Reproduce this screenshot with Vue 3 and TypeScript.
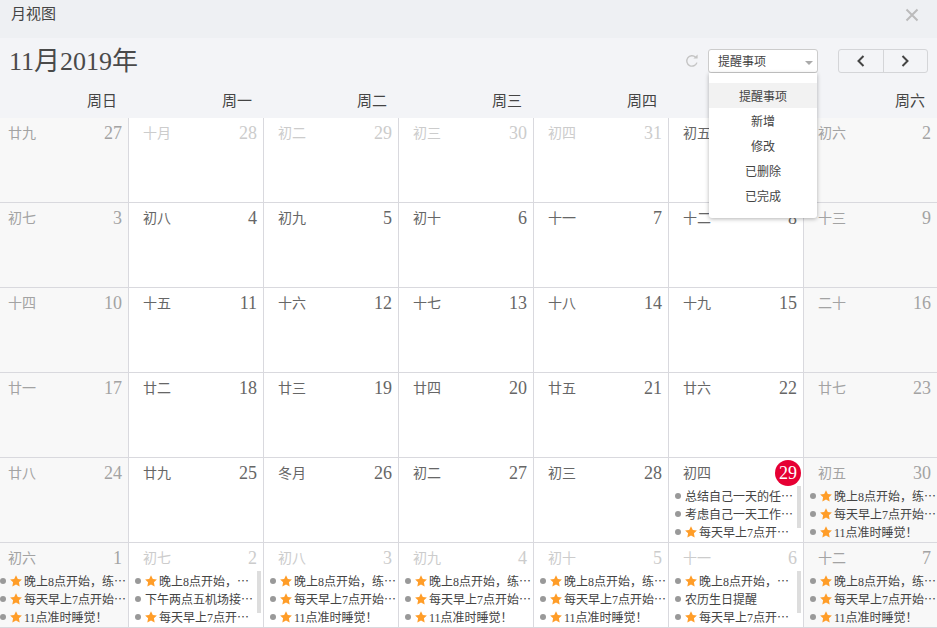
<template>
  <div class="page">
    <div class="title-bar">
      <span class="title">月视图</span>
      <svg class="close" width="14" height="14" viewBox="0 0 14 14">
        <path d="M1.5 1.5 12.5 12.5M12.5 1.5 1.5 12.5" />
      </svg>
    </div>

    <div class="toolbar">
      <h1 class="month">11月2019年</h1>
      <svg class="refresh" width="14" height="14" viewBox="0 0 14 14">
        <path d="M11.9 8.6A5.2 5.2 0 1 1 10.6 3.2" />
        <path class="refresh-tip" d="M8.4 4.6h4.2V.6z" />
      </svg>
      <div class="select">
        <span>提醒事项</span>
        <i class="caret"></i>
        <ul class="menu">
          <li v-for="(item, i) in menuItems" :key="item" :class="{ active: i === 0 }">{{ item }}</li>
        </ul>
      </div>
      <div class="nav">
        <button type="button">
          <svg width="10" height="14" viewBox="0 0 10 14"><path d="M7.5 2 2.5 7l5 5" /></svg>
        </button>
        <button type="button">
          <svg width="10" height="14" viewBox="0 0 10 14"><path d="M2.5 2l5 5-5 5" /></svg>
        </button>
      </div>
    </div>

    <div class="week grid">
      <div v-for="name in weekNames" :key="name" class="week-name">{{ name }}</div>
    </div>

    <div class="days grid">
      <div
        v-for="(day, i) in days"
        :key="i"
        class="day"
        :class="{ weekend: day.weekend, other: day.other, first: i % 7 === 0 }"
      >
        <div class="day-head">
          <span class="lunar">{{ day.lunar }}</span>
          <span class="num" :class="{ today: day.today }">{{ day.num }}</span>
        </div>
        <ul v-if="day.events.length" class="events">
          <li v-for="ev in day.events" :key="ev.text" class="event">
            <i class="dot"></i>
            <svg v-if="ev.star" class="star" width="12" height="12" viewBox="0 0 12 12">
              <path d="M6 .2l1.8 3.75 4.1.55-3 2.83.77 4.07L6 9.42l-3.67 1.98.77-4.07-3-2.83 4.1-.55z" />
            </svg>
            <span class="event-text">{{ ev.text }}</span>
          </li>
          <i v-if="day.scroll" class="scrollbar"></i>
        </ul>
      </div>
    </div>
  </div>
</template>

<script setup lang="ts">
interface CalEvent {
  text: string;
  star: boolean;
}

interface Day {
  lunar: string;
  num: number;
  weekend: boolean;
  other: boolean;
  today: boolean;
  scroll: boolean;
  events: CalEvent[];
}

const weekNames = ['周日', '周一', '周二', '周三', '周四', '周五', '周六'];
const menuItems = ['提醒事项', '新增', '修改', '已删除', '已完成'];

const lunars = [
  '廿九', '十月', '初二', '初三', '初四', '初五', '初六',
  '初七', '初八', '初九', '初十', '十一', '十二', '十三',
  '十四', '十五', '十六', '十七', '十八', '十九', '二十',
  '廿一', '廿二', '廿三', '廿四', '廿五', '廿六', '廿七',
  '廿八', '廿九', '冬月', '初二', '初三', '初四', '初五',
  '初六', '初七', '初八', '初九', '初十', '十一', '十二',
];

const routine: CalEvent[] = [
  { text: '晚上8点开始，练⋯', star: true },
  { text: '每天早上7点开始⋯', star: true },
  { text: '11点准时睡觉！', star: true },
];

const scrolling: Record<number, CalEvent[]> = {
  33: [
    { text: '总结自己一天的任⋯', star: false },
    { text: '考虑自己一天工作⋯', star: false },
    { text: '每天早上7点开⋯', star: true },
  ],
  36: [
    { text: '晚上8点开始，⋯', star: true },
    { text: '下午两点五机场接⋯', star: false },
    { text: '每天早上7点开⋯', star: true },
  ],
  40: [
    { text: '晚上8点开始，⋯', star: true },
    { text: '农历生日提醒', star: false },
    { text: '每天早上7点开⋯', star: true },
  ],
};

const days: Day[] = lunars.map((lunar, i) => {
  const date = new Date(2019, 9, 27 + i);
  return {
    lunar,
    num: date.getDate(),
    weekend: i % 7 === 0 || i % 7 === 6,
    other: date.getMonth() !== 10,
    today: i === 33,
    scroll: i in scrolling,
    events: scrolling[i] ?? (i >= 34 ? routine : []),
  };
});
</script>

<style>
html,
body {
  overflow: hidden;
}
</style>

<style scoped>
ul {
  list-style: none;
  margin: 0;
  padding: 0;
}

.page {
  width: 937px;
  height: 628px;
  overflow: hidden;
  background: #f3f4f7;
  color: #444;
  font-family: "Liberation Serif", "Noto Sans CJK SC", serif;
}

.title-bar {
  height: 38px;
  display: flex;
  align-items: flex-start;
  justify-content: space-between;
  padding: 6px 18px 0 11px;
  box-sizing: border-box;
  background: #eef0f3;
}

.title {
  font-size: 15px;
  line-height: 16px;
  color: #444;
}

.close {
  margin-top: 2px;
}

.close path {
  fill: none;
  stroke: #bbb;
  stroke-width: 2;
}

.toolbar {
  height: 46px;
  display: flex;
  align-items: center;
  padding: 0 9px;
}

.month {
  margin: 0 auto 6px 0;
  font-size: 26px;
  font-weight: normal;
  color: #4a4a4a;
}

.refresh {
  margin-right: 9px;
}

.refresh path {
  fill: none;
  stroke: #c4c4c4;
  stroke-width: 1.4;
}

.refresh .refresh-tip {
  fill: #c4c4c4;
  stroke: none;
}

.select {
  position: relative;
  width: 110px;
  height: 24px;
  box-sizing: border-box;
  display: flex;
  align-items: center;
  padding-left: 9px;
  background: #fff;
  border: 1px solid #ccc;
  border-radius: 3px;
  font-size: 12px;
}

.caret {
  position: absolute;
  right: 4px;
  top: 11px;
  border-style: solid;
  border-width: 4px 4px 0;
  border-color: #aaa transparent transparent;
}

.menu {
  position: absolute;
  top: 23px;
  left: 0;
  z-index: 5;
  width: 108px;
  padding: 10px 0;
  background: #fff;
  border-radius: 0 0 3px 3px;
  box-shadow: 0 1px 4px rgba(0, 0, 0, 0.3);
}

.menu li {
  height: 25px;
  line-height: 28px;
  text-align: center;
}

.menu li.active {
  background: #f2f2f2;
}

.nav {
  display: flex;
  margin-left: 20px;
  width: 90px;
  height: 24px;
  box-sizing: border-box;
  border: 1px solid #d4d5d8;
  border-radius: 3px;
}

.nav button {
  flex: 1;
  display: flex;
  align-items: center;
  justify-content: center;
  padding: 0;
  border: none;
  background: transparent;
}

.nav button + button {
  border-left: 1px solid #d4d5d8;
}

.nav path {
  fill: none;
  stroke: #444;
  stroke-width: 2;
}

.grid {
  display: grid;
  grid-template-columns: 129px repeat(5, 135px) 133px;
}

.week-name {
  height: 34px;
  line-height: 34px;
  padding-right: 12px;
  text-align: right;
  font-size: 15px;
  color: #444;
}

.days {
  grid-auto-rows: 85px;
  background: #fff;
}

.day {
  min-width: 0;
  box-sizing: border-box;
  border-right: 1px solid #d9d9de;
  border-bottom: 1px solid #d9d9de;
  color: #666;
}

.day:nth-child(7n) {
  border-right: none;
}

.day.other {
  color: #ccc;
}

.day.weekend {
  background: #f8f8f8;
  color: #a3a3a3;
}

.day-head {
  height: 30px;
  margin-bottom: -1px;
  display: flex;
  align-items: center;
  justify-content: space-between;
  padding: 0 6px 0 14px;
}

.first .day-head {
  padding-left: 8px;
}

.lunar {
  margin-bottom: 2px;
  font-size: 14px;
}

.num {
  font-size: 18px;
}

.num.today {
  width: 26px;
  height: 26px;
  margin-right: -4px;
  border-radius: 50%;
  background: #e60033;
  color: #fff;
  line-height: 26px;
  text-align: center;
}

.events {
  position: relative;
}

.event {
  height: 18px;
  display: flex;
  align-items: center;
  padding-left: 6px;
  font-size: 12px;
  color: #444;
  white-space: nowrap;
  overflow: hidden;
}

.first .event {
  padding-left: 0;
}

.dot {
  flex: none;
  width: 6px;
  height: 6px;
  margin-right: 4px;
  border-radius: 50%;
  background: #999;
}

.star {
  flex: none;
  margin-right: 2px;
}

.star path {
  fill: #ff9d28;
}

.scrollbar {
  position: absolute;
  top: -1px;
  right: 2px;
  width: 4px;
  height: 42px;
  background: #ddd;
}
</style>
